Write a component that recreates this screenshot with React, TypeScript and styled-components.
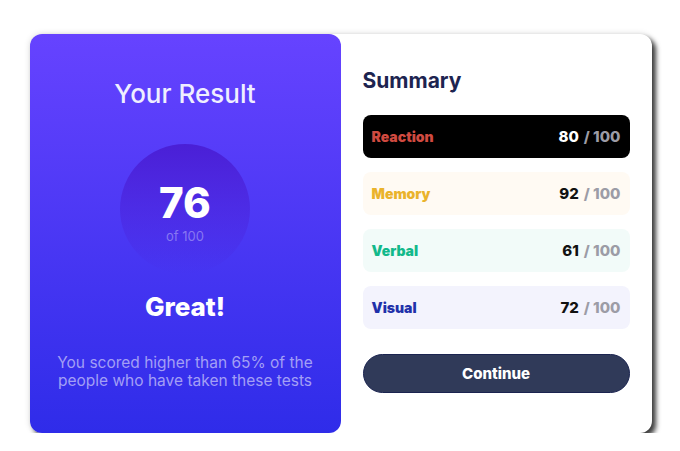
import React, { FC } from 'react';
import styled, { createGlobalStyle } from 'styled-components';

const GlobalStyle = createGlobalStyle`
    * {
        box-sizing: border-box;
    }
    body {
        margin: 0;
        background: #ffffff;
        font-family: 'Inter', 'Liberation Sans', sans-serif;
    }
`;

type SummaryItem = {
    label: string;
    score: number;
    color: string;
    background: string;
    scoreColor: string;
};

const items: SummaryItem[] = [
    { label: 'Reaction', score: 80, color: '#d04a40', background: '#000000', scoreColor: '#ffffff' },
    { label: 'Memory', score: 92, color: '#eab32c', background: '#fffaf3', scoreColor: '#111111' },
    { label: 'Verbal', score: 61, color: '#13b98b', background: '#f2fbf9', scoreColor: '#111111' },
    { label: 'Visual', score: 72, color: '#1f31aa', background: '#f3f3fd', scoreColor: '#111111' },
];

const SummaryRow: FC<{ item: SummaryItem }> = ({ item }) => {
    return (
        <Row $bg={item.background}>
            <Label $color={item.color}>{item.label}</Label>
            <Score>
                <Value $color={item.scoreColor}>{item.score}</Value>
                <OutOf>/ 100</OutOf>
            </Score>
        </Row>
    );
};

export default function App() {
    return (
        <Page>
            <GlobalStyle />
            <Card>
                <ResultPanel>
                    <Title>Your Result</Title>
                    <Circle>
                        <Big>76</Big>
                        <Of>of 100</Of>
                    </Circle>
                    <Verdict>Great!</Verdict>
                    <Description>You scored higher than 65% of the people who have taken these tests</Description>
                </ResultPanel>
                <SummaryPanel>
                    <SummaryTitle>Summary</SummaryTitle>
                    <List>
                        {items.map((item) => (
                            <SummaryRow key={item.label} item={item} />
                        ))}
                    </List>
                    <ContinueButton>Continue</ContinueButton>
                </SummaryPanel>
            </Card>
        </Page>
    );
}

const Page = styled.div`
    display: flex;
    justify-content: center;
    padding: 34px 0 0 1px;
`;

const Card = styled.div`
    width: 622px;
    height: 399px;
    display: flex;
    background: #ffffff;
    border-radius: 12px;
    box-shadow: 4px 4px 5px rgba(0, 0, 0, 0.75), 0 0 6px rgba(0, 0, 0, 0.15);
`;

const ResultPanel = styled.div`
    width: 311px;
    flex-shrink: 0;
    display: flex;
    flex-direction: column;
    align-items: center;
    padding-top: 44px;
    border-radius: 12px;
    background: linear-gradient(180deg, #6643ff 0%, #2f2ce9 100%);
    text-align: center;
`;

const Title = styled.h1`
    margin: 0;
    font-size: 26px;
    line-height: 32px;
    font-weight: 500;
    color: #efeeff;
`;

const Circle = styled.div`
    margin-top: 34px;
    width: 130px;
    height: 130px;
    border-radius: 50%;
    display: flex;
    flex-direction: column;
    align-items: center;
    justify-content: center;
    padding-top: 6px;
    background: linear-gradient(180deg, #4a1fd6 0%, rgba(74, 36, 220, 0) 100%);
`;

const Big = styled.span`
    font-size: 42px;
    line-height: 44px;
    font-weight: 800;
    color: #ffffff;
`;

const Of = styled.span`
    margin-top: 3px;
    font-size: 13px;
    line-height: 16px;
    color: rgba(255, 255, 255, 0.35);
`;

const Verdict = styled.h2`
    margin: 17px 0 0;
    font-size: 26px;
    line-height: 32px;
    font-weight: 800;
    color: #ffffff;
`;

const Description = styled.p`
    margin: 31px 0 0;
    width: 270px;
    font-size: 15.5px;
    line-height: 18px;
    color: #a39ff5;
`;

const SummaryPanel = styled.div`
    flex: 1;
    display: flex;
    flex-direction: column;
    padding: 34px 22px 0;
`;

const SummaryTitle = styled.h2`
    margin: 0;
    font-size: 21px;
    line-height: 26px;
    font-weight: 700;
    color: #1d2450;
`;

const List = styled.div`
    margin-top: 21px;
    display: flex;
    flex-direction: column;
    gap: 14px;
`;

const Row = styled.div<{ $bg: string }>`
    height: 43px;
    display: flex;
    align-items: center;
    justify-content: space-between;
    padding: 0 9px;
    border-radius: 8px;
    background: ${(p) => p.$bg};
`;

const Label = styled.span<{ $color: string }>`
    font-size: 14px;
    font-weight: 900;
    color: ${(p) => p.$color};
`;

const Score = styled.span`
    display: flex;
    gap: 5px;
    font-size: 15px;
    font-weight: 800;
`;

const Value = styled.span<{ $color: string }>`
    color: ${(p) => p.$color};
`;

const OutOf = styled.span`
    color: #9c9ca6;
`;

const ContinueButton = styled.button`
    margin-top: 25px;
    height: 39px;
    border: 1px solid #1b2450;
    border-radius: 20px;
    background: #303a59;
    color: #ffffff;
    font-family: 'Inter', 'Liberation Sans', sans-serif;
    font-size: 15px;
    font-weight: 800;
    cursor: pointer;
`;
